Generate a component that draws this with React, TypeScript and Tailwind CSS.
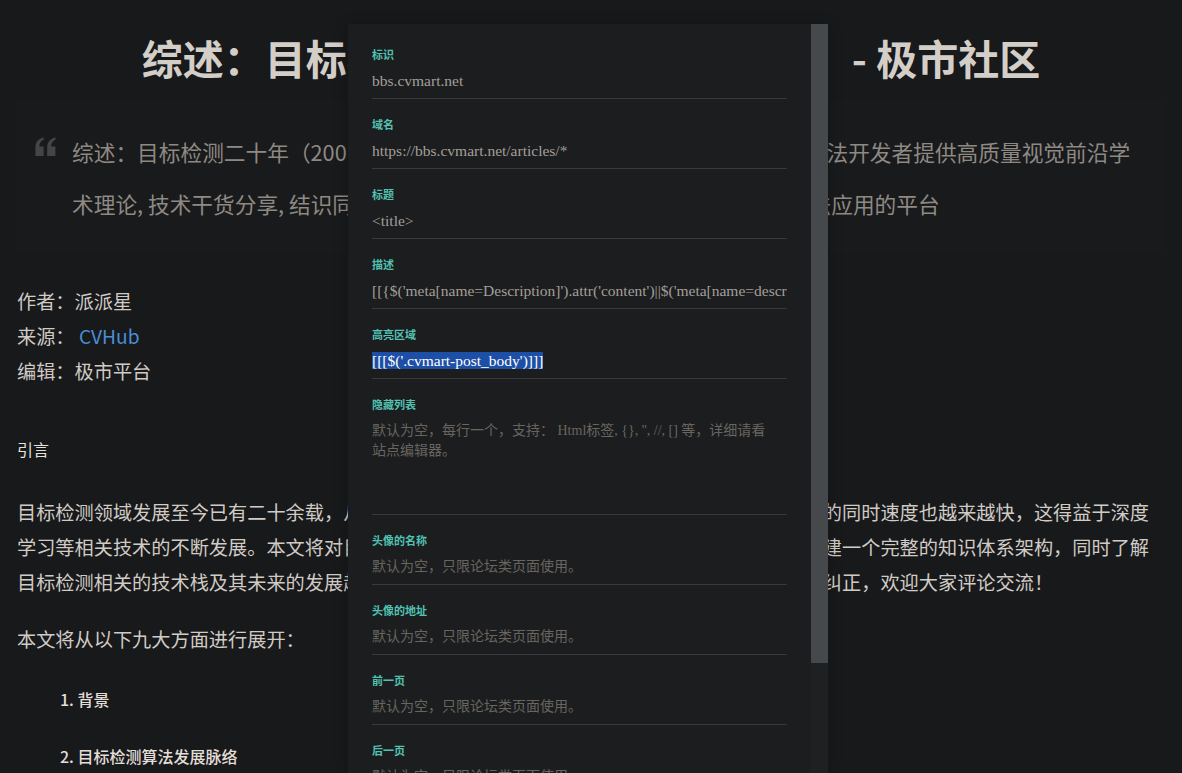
import React from "react";

type Row = {
  label: string;
  value?: string;
  placeholder?: string[];
  selected?: boolean;
  area?: boolean;
};

const rows: Row[] = [
  { label: "标识", value: "bbs.cvmart.net" },
  { label: "域名", value: "https://bbs.cvmart.net/articles/*" },
  { label: "标题", value: "<title>" },
  {
    label: "描述",
    value:
      "[[{$('meta[name=Description]').attr('content')||$('meta[name=description]').attr('content')}]]",
  },
  { label: "高亮区域", value: "[[[$('.cvmart-post_body')]]]", selected: true },
  {
    label: "隐藏列表",
    placeholder: [
      "默认为空，每行一个，支持： Html标签, {}, '', //, [] 等，详细请看",
      "站点编辑器。",
    ],
    area: true,
  },
  { label: "头像的名称", placeholder: ["默认为空，只限论坛类页面使用。"] },
  { label: "头像的地址", placeholder: ["默认为空，只限论坛类页面使用。"] },
  { label: "前一页", placeholder: ["默认为空，只限论坛类页面使用。"] },
  { label: "后一页", placeholder: ["默认为空，只限论坛类页面使用。"] },
];

function QuoteMark() {
  return (
    <svg width="21" height="19" viewBox="0 0 21 19" className="block">
      <path
        d="M8.5 0.3 C3.5 1.8 0.4 5.2 0.4 10 L0.4 19 L8.6 19 L8.6 9.6 L4.3 9.6 C4.3 6.4 5.8 4 8.8 2.8 Z"
        fill="#444546"
      />
      <path
        d="M20.3 0.3 C15.3 1.8 12.2 5.2 12.2 10 L12.2 19 L20.4 19 L20.4 9.6 L16.1 9.6 C16.1 6.4 17.6 4 20.6 2.8 Z"
        fill="#444546"
      />
    </svg>
  );
}

export default function App() {
  return (
    <div className="relative h-[773px] w-full overflow-hidden bg-[#18191b] font-['Noto_Sans_CJK_SC',sans-serif]">
      {/* Article */}
      <div className="px-[17px] pt-[26px]">
        <h1 className="text-center text-[41px] leading-[63px] font-bold text-[#d3cec7] whitespace-nowrap">
          综述：目标检测二十年（2001-2021） - 极市社区
        </h1>

        <div className="mt-[11px] flex overflow-hidden bg-[#191a1c] pt-[26px] pb-[23px] pl-[18px]">
          <div className="w-[37px] shrink-0 pt-[11px]">
            <QuoteMark />
          </div>
          <div className="text-[21.7px] leading-[52px] text-[#8e8983]">
            <div className="whitespace-nowrap">
              综述：目标检测二十年（2001-2021）极市视觉算法开发者社区，旨在为视觉算法开发者提供高质量视觉前沿学
            </div>
            <div className="whitespace-nowrap">
              术理论, 技术干货分享, 结识同业伙伴, 协同翻译国外视觉算法干货, 分享视觉算法应用的平台
            </div>
          </div>
        </div>

        <div className="mt-[31px] text-[19.2px] leading-[35px] text-[#d0cbc5]">
          <div>作者：派派星</div>
          <div>
            来源： <span className="text-[#4a8fd6]">CVHub</span>
          </div>
          <div>编辑：极市平台</div>
        </div>

        <div className="mt-[48px] text-[16px] leading-[24px] text-[#e6e3de]">引言</div>

        <div className="mt-[34px] text-[19.2px] leading-[35px] text-[#d0cbc5]">
          <div className="whitespace-nowrap">
            目标检测领域发展至今已有二十余载，从早期的传统方法到如今的深度学习方法，精度越来越高的同时速度也越来越快，这得益于深度
          </div>
          <div className="whitespace-nowrap">
            学习等相关技术的不断发展。本文将对目标检测领域的发展做一个系统性的梳理，旨在为读者构建一个完整的知识体系架构，同时了解
          </div>
          <div className="whitespace-nowrap">
            目标检测相关的技术栈及其未来的发展趋势。由于作者水平有限，文中如有错误之处，还请指出纠正，欢迎大家评论交流！
          </div>
        </div>

        <div className="mt-[22px] text-[19.2px] leading-[35px] text-[#d0cbc5]">
          本文将从以下九大方面进行展开：
        </div>

        <div className="pl-[43px] text-[16px] leading-[24px] font-medium text-[#e2ded8]">
          <div className="mt-[30px]">1. 背景</div>
          <div className="mt-[33px]">2. 目标检测算法发展脉络</div>
        </div>
      </div>

      {/* Overlay editor panel */}
      <div className="absolute left-[348px] top-[24px] flex h-[749px] w-[480px] bg-[#1c1d1f] shadow-[0_0_12px_rgba(0,0,0,0.25)]">
        <div className="w-[463px] overflow-hidden px-[24px] pt-[5px]">
          {rows.map((r) => (
            <div key={r.label} className="border-b border-[#38393b] pt-[17px] pb-[7px]">
              <div className="text-[11px] leading-[16px] font-bold text-[#52c2b2]">{r.label}</div>
              {r.value !== undefined ? (
                <div className="mt-[9px] overflow-hidden whitespace-nowrap text-[15.5px] leading-[20px] text-[#a39f99] font-['Liberation_Serif','Noto_Sans_CJK_SC',serif]">
                  {r.selected ? (
                    <span className="bg-[#1d4fa6] text-white">{r.value}</span>
                  ) : (
                    r.value
                  )}
                </div>
              ) : (
                <div
                  className={
                    (r.area ? "h-[86px] " : "h-[20px] ") +
                    "mt-[9px] text-[14px] leading-[20px] text-[#68655f] font-['Liberation_Serif','Noto_Sans_CJK_SC',serif]"
                  }
                >
                  {r.placeholder?.map((p, i) => (
                    <div key={i} className="whitespace-nowrap">
                      {p}
                    </div>
                  ))}
                </div>
              )}
            </div>
          ))}
        </div>
        <div className="w-[17px] bg-[#1f2022]">
          <div className="h-[639px] bg-[#45494b]" />
        </div>
      </div>
    </div>
  );
}
